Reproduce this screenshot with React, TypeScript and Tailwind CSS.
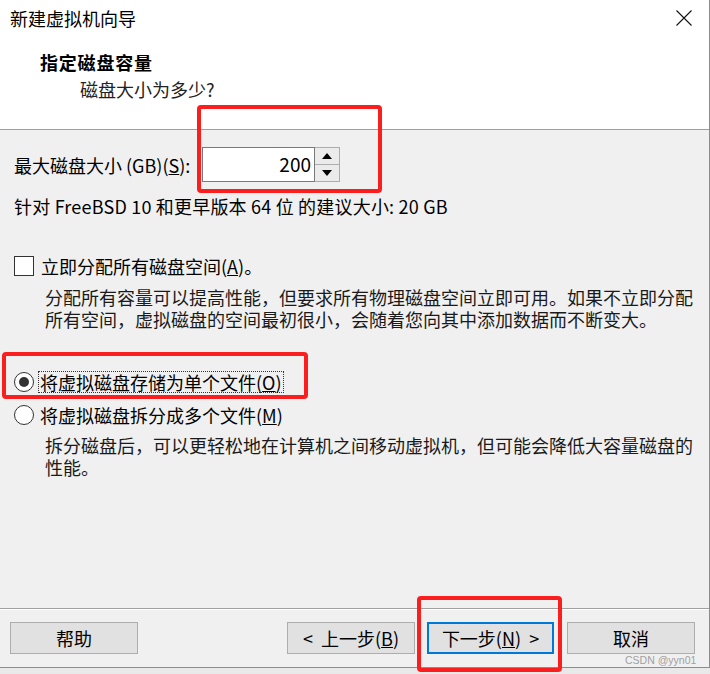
import React from "react";

const font = { fontFamily: '"Noto Sans CJK SC", "Noto Sans", sans-serif' };

function Btn({ children, primary }: { children: React.ReactNode; primary?: boolean }) {
  return (
    <div
      className={
        "flex h-[32px] items-center justify-center bg-[#e1e1e1] text-[18px] leading-none text-black " +
        (primary ? "w-[127px] border-2 border-[#0078d7]" : "w-[128px] border border-[#adadad]")
      }
    >
      {children}
    </div>
  );
}

export default function App() {
  return (
    <div className="relative h-[674px] w-[710px] overflow-hidden bg-[#e9e9e9]" style={font}>
      <div className="flex h-[668px] w-[710px] flex-col border-b border-r border-[#8c8c8c] bg-[#f0f0f0]">
        {/* header */}
        <div className="h-[130px] shrink-0 border-b border-[#a0a0a0] bg-white">
          <div className="flex h-[30px] items-start justify-between pl-[10px] pr-[17px] pt-[6px]">
            <span className="text-[18px] leading-[24px] text-black">新建虚拟机向导</span>
            <svg width="16" height="16" viewBox="0 0 16 16" className="mt-[4px]">
              <path d="M0.5 0.5 L15.5 15.5 M15.5 0.5 L0.5 15.5" stroke="#111" strokeWidth="1.1" fill="none" />
            </svg>
          </div>
          <div className="mt-[20px] pl-[40px] text-[18px] font-bold leading-[24px] tracking-[0.8px] text-black">
            指定磁盘容量
          </div>
          <div className="mt-[3px] pl-[80px] text-[18px] leading-[24px] text-[#222]">磁盘大小为多少?</div>
        </div>

        {/* body */}
        <div className="flex flex-1 flex-col text-[18px] text-black">
          <div className="mt-[17px] flex h-[35px] items-center pl-[14px]">
            <span className="w-[188px] leading-[24px]">
              最大磁盘大小 (GB)(<u>S</u>):
            </span>
            <div className="flex h-[35px] w-[113px] items-center justify-end border border-[#7a7a7a] bg-white pr-[3px] text-[19px]">
              200
            </div>
            <div className="flex h-[35px] w-[25px] flex-col border border-l-0 border-[#adadad] bg-[#ebebeb]">
              <div className="flex flex-1 items-center justify-center border-b border-[#adadad]">
                <svg width="10" height="6" viewBox="0 0 10 6">
                  <path d="M0 6 L5 0 L10 6 Z" fill="#000" />
                </svg>
              </div>
              <div className="flex flex-1 items-center justify-center">
                <svg width="10" height="6" viewBox="0 0 10 6">
                  <path d="M0 0 L10 0 L5 6 Z" fill="#000" />
                </svg>
              </div>
            </div>
          </div>

          <div className="mt-[12px] pl-[14px] leading-[24px] tracking-[0.2px]">
            针对 FreeBSD 10 和更早版本 64 位 的建议大小: 20 GB
          </div>

          <div className="mt-[36px] flex h-[24px] items-center pl-[14px]">
            <div className="h-[20px] w-[20px] border border-[#333] bg-white" />
            <span className="ml-[7px] leading-[24px]">
              立即分配所有磁盘空间(<u>A</u>)。
            </span>
          </div>
          <div className="mt-[8px] flex flex-col pl-[45px] pr-[14px] text-[#1a1a1a]">
            <div className="h-[22px] leading-[22px]">
              分配所有容量可以提高性能，但要求所有物理磁盘空间立即可用。如果不立即分配
            </div>
            <div className="h-[22px] leading-[22px]">
              所有空间，虚拟磁盘的空间最初很小，会随着您向其中添加数据而不断变大。
            </div>
          </div>

          <div className="mt-[40px] flex h-[24px] items-center pl-[14px]">
            <div className="flex h-[20px] w-[20px] items-center justify-center rounded-full border border-[#333] bg-white">
              <div className="h-[10px] w-[10px] rounded-full bg-[#333]" />
            </div>
            <span className="ml-[4px] border border-dotted border-[#333] px-[1px] leading-[20px]">
              将虚拟磁盘存储为单个文件(<u>O</u>)
            </span>
          </div>
          <div className="mt-[9px] flex h-[24px] items-center pl-[14px]">
            <div className="h-[20px] w-[20px] rounded-full border border-[#333] bg-white" />
            <span className="ml-[6px] leading-[24px]">
              将虚拟磁盘拆分成多个文件(<u>M</u>)
            </span>
          </div>
          <div className="mt-[7px] flex flex-col pl-[45px] pr-[14px] text-[#1a1a1a]">
            <div className="h-[22px] leading-[22px]">
              拆分磁盘后，可以更轻松地在计算机之间移动虚拟机，但可能会降低大容量磁盘的
            </div>
            <div className="h-[22px] leading-[22px]">性能。</div>
          </div>
        </div>

        {/* footer */}
        <div className="h-[59px] shrink-0 border-t border-[#a0a0a0]">
          <div className="flex h-full items-start justify-between border-t border-white pl-[10px] pr-[14px] pt-[12px]">
            <Btn>帮助</Btn>
            <div className="flex gap-[12px]">
              <Btn>
                &lt;&nbsp; 上一步(<u>B</u>)
              </Btn>
              <Btn primary>
                下一步(<u>N</u>)&nbsp; &gt;
              </Btn>
              <div className="ml-[1px]">
                <Btn>取消</Btn>
              </div>
            </div>
          </div>
        </div>
      </div>

      {/* annotations */}
      <div className="absolute left-[197px] top-[105px] h-[88px] w-[185px] rounded-[4px] border-[4px] border-[#fa1e1e]" />
      <div className="absolute left-[2px] top-[352px] h-[47px] w-[306px] rounded-[4px] border-[4px] border-[#fa1e1e]" />
      <div className="absolute left-[417px] top-[596px] h-[76px] w-[145px] rounded-[4px] border-[4px] border-[#fa1e1e]" />
      <div
        className="absolute left-[625px] top-[654px] text-[10.5px] leading-[13px] text-[#a0a0a0]"
        style={{ fontFamily: '"Liberation Sans", sans-serif' }}
      >
        CSDN @yyn01
      </div>
    </div>
  );
}
